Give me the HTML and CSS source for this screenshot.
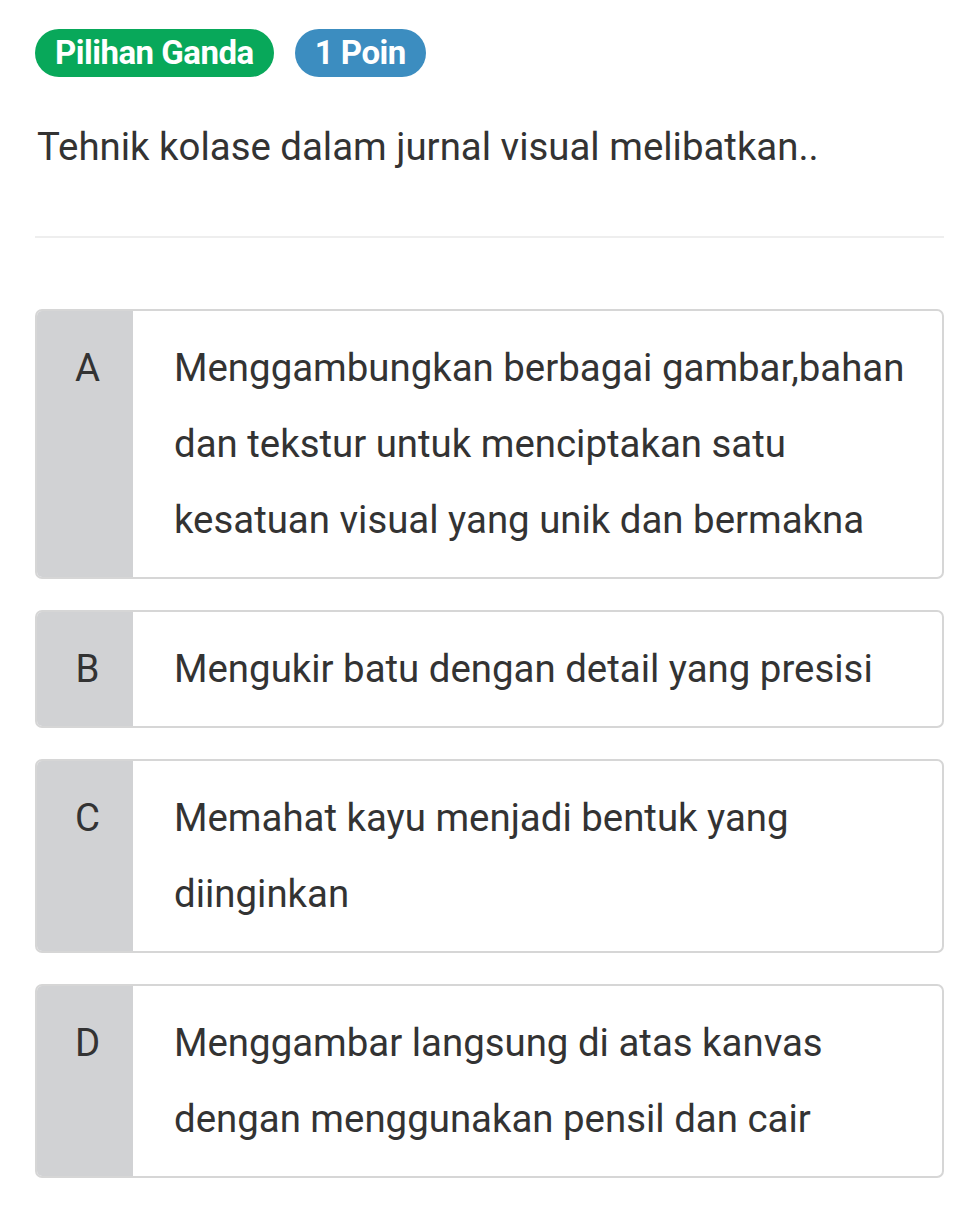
FILE: index.html
```html
<!DOCTYPE html>
<html>
<head>
<meta charset="utf-8">
<link rel="stylesheet" href="styles.css">
</head>
<body>
<div class="page">
  <div class="badges">
    <span class="badge badge-green">Pilihan Ganda</span>
    <span class="badge badge-blue">1 Poin</span>
  </div>
  <p class="question">Tehnik kolase dalam jurnal visual melibatkan..</p>
  <hr class="divider">
  <div class="options">
    <div class="option">
      <div class="letter">A</div>
      <div class="text">Menggambungkan berbagai gambar,bahan dan tekstur untuk menciptakan satu kesatuan visual yang unik dan bermakna</div>
    </div>
    <div class="option">
      <div class="letter">B</div>
      <div class="text">Mengukir batu dengan detail yang presisi</div>
    </div>
    <div class="option">
      <div class="letter">C</div>
      <div class="text">Memahat kayu menjadi bentuk yang diinginkan</div>
    </div>
    <div class="option">
      <div class="letter">D</div>
      <div class="text">Menggambar langsung di atas kanvas dengan menggunakan pensil dan cair</div>
    </div>
  </div>
</div>
</body>
</html>
```
FILE: styles.css
```css
html, body {
  margin: 0;
  padding: 0;
  background: #ffffff;
}
body {
  font-family: Roboto, "Liberation Sans", sans-serif;
  color: #333333;
}
.page {
  padding: 29px 33px 0 35px;
}
.badges {
  display: flex;
  gap: 21px;
}
.badge {
  display: inline-block;
  height: 48px;
  line-height: 48px;
  padding: 0 20px;
  border-radius: 24px;
  color: #ffffff;
  font-weight: 700;
  font-size: 33px;
  letter-spacing: -0.5px;
}
.badge-green {
  background: #08a85a;
}
.badge-blue {
  background: #3c8dc0;
}
.question {
  margin: 46px 0 0 2px;
  font-size: 38.4px;
  line-height: 48px;
  color: #333333;
}
.divider {
  margin: 65px 0 0 0;
  border: none;
  border-top: 2px solid #eeeeee;
}
.options {
  margin-top: 71px;
  display: flex;
  flex-direction: column;
  gap: 31px;
}
.option {
  display: flex;
  border: 2px solid #d6d6d6;
  border-radius: 7px;
  overflow: hidden;
}
.letter {
  width: 96px;
  flex: none;
  background: #d1d2d4;
  display: flex;
  justify-content: center;
  padding-top: 19px;
  padding-left: 5px;
  box-sizing: border-box;
  font-size: 38.4px;
  line-height: 76px;
}
.text {
  flex: 1;
  padding: 19px 20px 19px 41px;
  font-size: 38.4px;
  line-height: 76px;
}
```
